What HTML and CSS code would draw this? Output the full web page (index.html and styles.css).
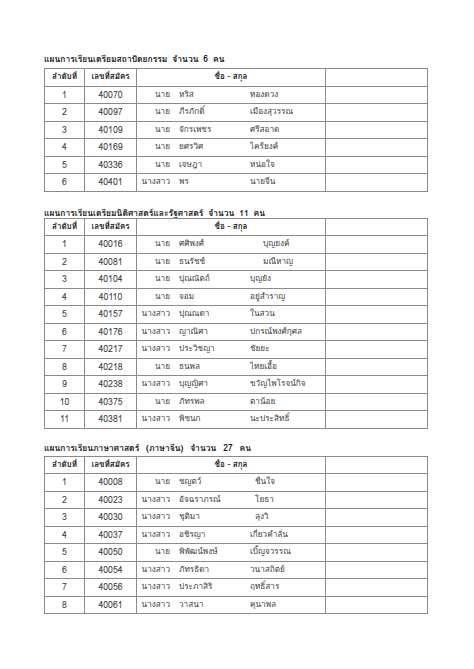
FILE: index.html
```html
<!DOCTYPE html>
<html lang="th">
<head>
<meta charset="utf-8">
<link rel="stylesheet" href="styles.css">
</head>
<body>
<div class="page">
  <section class="block b1">
    <h2 class="title">แผนการเรียนเตรียมสถาปัตยกรรม จำนวน 6 คน</h2>
    <table class="list">
      <thead><tr><th class="c1">ลำดับที่</th><th class="c2">เลขที่สมัคร</th><th class="c3 hname">ชื่อ - สกุล</th><th class="c4"></th></tr></thead>
      <tbody>
        <tr><td class="num">1</td><td class="num">40070</td><td class="nm"><span class="px">นาย</span><span class="fn">หริส</span><span class="ln">ทองดวง</span></td><td></td></tr>
        <tr><td class="num">2</td><td class="num">40097</td><td class="nm"><span class="px">นาย</span><span class="fn">ภีรภักดิ์</span><span class="ln">เมืองสุวรรณ</span></td><td></td></tr>
        <tr><td class="num">3</td><td class="num">40109</td><td class="nm"><span class="px">นาย</span><span class="fn">จักรเพชร</span><span class="ln">ศรีสอาด</span></td><td></td></tr>
        <tr><td class="num">4</td><td class="num">40169</td><td class="nm"><span class="px">นาย</span><span class="fn">ยศรวิศ</span><span class="ln">ไคร้ยงค์</span></td><td></td></tr>
        <tr><td class="num">5</td><td class="num">40336</td><td class="nm"><span class="px">นาย</span><span class="fn">เจษฎา</span><span class="ln">หน่อใจ</span></td><td></td></tr>
        <tr><td class="num">6</td><td class="num">40401</td><td class="nm"><span class="px">นางสาว</span><span class="fn">พร</span><span class="ln">นายจีน</span></td><td></td></tr>
      </tbody>
    </table>
  </section>

  <section class="block b2">
    <h2 class="title">แผนการเรียนเตรียมนิติศาสตร์และรัฐศาสตร์ จำนวน 11 คน</h2>
    <table class="list">
      <thead><tr><th class="c1">ลำดับที่</th><th class="c2">เลขที่สมัคร</th><th class="c3 hname">ชื่อ - สกุล</th><th class="c4"></th></tr></thead>
      <tbody>
        <tr><td class="num">1</td><td class="num">40016</td><td class="nm"><span class="px">นาย</span><span class="fn fn-wide">ศศิพงศ์</span><span class="ln">บุญยงค์</span></td><td></td></tr>
        <tr><td class="num">2</td><td class="num">40081</td><td class="nm"><span class="px">นาย</span><span class="fn fn-wide">ธนรัชช์</span><span class="ln">มณีหาญ</span></td><td></td></tr>
        <tr><td class="num">3</td><td class="num">40104</td><td class="nm"><span class="px">นาย</span><span class="fn">ปุณณัตถ์</span><span class="ln">บุญยัง</span></td><td></td></tr>
        <tr><td class="num">4</td><td class="num">40110</td><td class="nm"><span class="px">นาย</span><span class="fn">จอม</span><span class="ln">อยู่สำราญ</span></td><td></td></tr>
        <tr><td class="num">5</td><td class="num">40157</td><td class="nm"><span class="px">นางสาว</span><span class="fn">ปุณณดา</span><span class="ln">ในสวน</span></td><td></td></tr>
        <tr><td class="num">6</td><td class="num">40176</td><td class="nm"><span class="px">นางสาว</span><span class="fn">ญาณิศา</span><span class="ln">ปกรณ์พงศ์กุศล</span></td><td></td></tr>
        <tr><td class="num">7</td><td class="num">40217</td><td class="nm"><span class="px">นางสาว</span><span class="fn">ประวิชญา</span><span class="ln">ชัยยะ</span></td><td></td></tr>
        <tr><td class="num">8</td><td class="num">40218</td><td class="nm"><span class="px">นาย</span><span class="fn">ธนพล</span><span class="ln">ไทยเอื้อ</span></td><td></td></tr>
        <tr><td class="num">9</td><td class="num">40238</td><td class="nm"><span class="px">นางสาว</span><span class="fn">บุญญิศา</span><span class="ln">ขวัญไพโรจน์กิจ</span></td><td></td></tr>
        <tr><td class="num">10</td><td class="num">40375</td><td class="nm"><span class="px">นาย</span><span class="fn">ภัทรพล</span><span class="ln">ตาน้อย</span></td><td></td></tr>
        <tr><td class="num">11</td><td class="num">40381</td><td class="nm"><span class="px">นางสาว</span><span class="fn">พิชนก</span><span class="ln">นะประสิทธิ์</span></td><td></td></tr>
      </tbody>
    </table>
  </section>

  <section class="block b3">
    <h2 class="title t3">แผนการเรียนภาษาศาสตร์ (ภาษาจีน) จำนวน 27 คน</h2>
    <table class="list">
      <thead><tr><th class="c1">ลำดับที่</th><th class="c2">เลขที่สมัคร</th><th class="c3 hname">ชื่อ - สกุล</th><th class="c4"></th></tr></thead>
      <tbody>
        <tr><td class="num">1</td><td class="num">40008</td><td class="nm"><span class="px">นาย</span><span class="fn fn-mid">ชญตว์</span><span class="ln">ชื่นใจ</span></td><td></td></tr>
        <tr><td class="num">2</td><td class="num">40023</td><td class="nm"><span class="px">นางสาว</span><span class="fn fn-mid">อัจฉราภรณ์</span><span class="ln">โยธา</span></td><td></td></tr>
        <tr><td class="num">3</td><td class="num">40030</td><td class="nm"><span class="px">นางสาว</span><span class="fn fn-mid">ชุติมา</span><span class="ln">ลุงวิ</span></td><td></td></tr>
        <tr><td class="num">4</td><td class="num">40037</td><td class="nm"><span class="px">นางสาว</span><span class="fn">อชิรญา</span><span class="ln">เกี่ยวคำลั่น</span></td><td></td></tr>
        <tr><td class="num">5</td><td class="num">40050</td><td class="nm"><span class="px">นาย</span><span class="fn">พิพัฒน์พงษ์</span><span class="ln">เบิ้ญจวรรณ</span></td><td></td></tr>
        <tr><td class="num">6</td><td class="num">40054</td><td class="nm"><span class="px">นางสาว</span><span class="fn">ภัทรธิดา</span><span class="ln">วนาสถิตย์</span></td><td></td></tr>
        <tr><td class="num">7</td><td class="num">40056</td><td class="nm"><span class="px">นางสาว</span><span class="fn">ประภาสิริ</span><span class="ln">ฤทธิ์สาร</span></td><td></td></tr>
        <tr><td class="num">8</td><td class="num">40061</td><td class="nm"><span class="px">นางสาว</span><span class="fn">วาสนา</span><span class="ln">คุนาพล</span></td><td></td></tr>
      </tbody>
    </table>
  </section>
</div>
</body>
</html>
```

FILE: styles.css
```css
html, body {
  margin: 0;
  padding: 0;
  background: #ffffff;
}

.page {
  padding: 53px 0 0 44px;
  font-family: "Loma", "Garuda", "Noto Sans Thai", "Noto Sans", "DejaVu Sans", sans-serif;
  color: #3a3a3a;
}

.block {
  display: flex;
  flex-direction: column;
}

.b2 { margin-top: 16px; }
.b3 { margin-top: 13px; }

.title {
  margin: 0 0 2px 0;
  height: 12px;
  line-height: 12px;
  font-size: 8.5px;
  font-weight: bold;
  color: #1a1a1a;
  word-spacing: 2px;
}

.title.t3 { word-spacing: 4px; }

.b1 .title { margin-bottom: 3px; }
.b2 .title { margin-bottom: 0; height: 10px; line-height: 10px; }

.list {
  border-collapse: collapse;
  table-layout: fixed;
  width: 380px;
  font-size: 8.2px;
}

.list th,
.list td {
  border: 1px solid #8a8a8a;
  height: 16.5px;
  padding: 0;
  text-align: center;
  vertical-align: middle;
  line-height: 12px;
  white-space: nowrap;
  overflow: hidden;
}

.list th {
  font-weight: bold;
  font-size: 8px;
  color: #222222;
}

.list td.num {
  font-size: 8.7px;
}

.c1 { width: 39px; }
.c2 { width: 51px; }
.c3 { width: 188px; }
.c4 { width: 101px; }

.hname {
  padding-left: 30px;
}

.list td.nm {
  text-align: left;
}

.px {
  display: inline-block;
  width: 33px;
  text-align: right;
  margin-right: 9px;
}

.fn {
  display: inline-block;
  width: 71px;
}

.fn-wide { width: 84px; }
.fn-mid { width: 76px; }

.ln {
  display: inline-block;
}
```
